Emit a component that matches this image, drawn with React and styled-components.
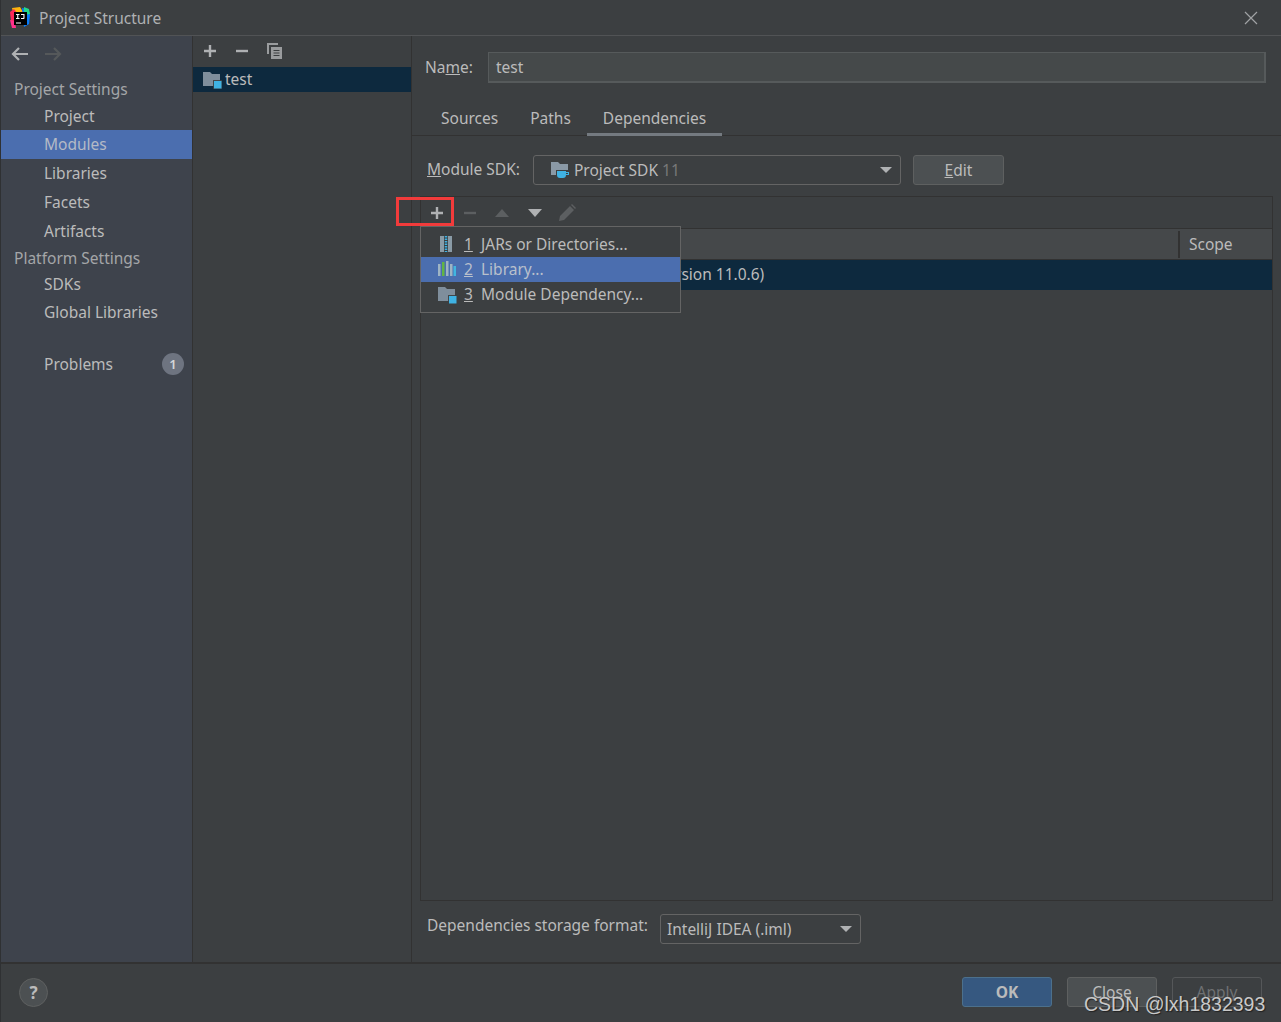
import styled, { createGlobalStyle } from 'styled-components';

const GlobalStyle = createGlobalStyle`
  html, body {
    margin: 0;
    padding: 0;
    background: #3c3f41;
  }
  * {
    box-sizing: border-box;
  }
`;

const Window = styled.div`
  position: relative;
  width: 1281px;
  height: 1022px;
  display: flex;
  flex-direction: column;
  overflow: hidden;
  background: #3c3f41;
  border-left: 1px solid #2f3133;
  color: #bbbbbb;
  font-family: 'Noto Sans', 'Open Sans', sans-serif;
  font-size: 15.5px;
  line-height: 20px;
`;

const TitleBar = styled.div`
  height: 36px;
  flex: none;
  display: flex;
  align-items: center;
  padding: 0 22px 0 8px;
  border-bottom: 1px solid #515355;
  color: #afb1b3;
`;

const TitleText = styled.span`
  margin-left: 8px;
  flex: 1;
`;

const Body = styled.div`
  flex: 1;
  min-height: 0;
  display: flex;
`;

const Sidebar = styled.aside`
  width: 192px;
  flex: none;
  background: #3e434c;
  border-right: 1px solid #323232;
`;

const NavArrows = styled.div`
  height: 40px;
  display: flex;
  align-items: center;
  gap: 13px;
  padding: 0 0 5px 9px;
`;

const SideHeading = styled.div`
  height: ${(p) => p.$h}px;
  display: flex;
  align-items: center;
  padding: 0 0 0 13px;
  color: #a4a6a8;
`;

const SideItem = styled.div`
  height: ${(p) => p.$h || 29}px;
  margin-top: ${(p) => p.$mt || 0}px;
  display: flex;
  align-items: center;
  justify-content: space-between;
  padding: 0 8px 1px 43px;
  background: ${(p) => (p.$active ? '#4b6eaf' : 'transparent')};
  color: ${(p) => (p.$active ? '#b4bac6' : '#bbbbbb')};
`;

const CountBadge = styled.span`
  width: 22px;
  height: 22px;
  border-radius: 50%;
  background: #6e7480;
  color: #d5d7da;
  font-size: 13px;
  font-weight: 600;
  display: flex;
  align-items: center;
  justify-content: center;
`;

const ModulePane = styled.section`
  width: 219px;
  flex: none;
  border-right: 1px solid #323232;
`;

const ModuleTools = styled.div`
  height: 31px;
  display: flex;
  align-items: center;
  gap: 16px;
  padding: 0 0 2px 9px;
`;

const ModuleRow = styled.div`
  height: 25px;
  display: flex;
  align-items: center;
  gap: 3px;
  padding: 0 0 2px 9px;
  background: #0d293e;
`;

const Detail = styled.section`
  flex: 1;
  min-width: 0;
  display: flex;
  flex-direction: column;
`;

const NameRow = styled.div`
  display: flex;
  align-items: center;
  margin-top: 16px;
  padding: 0 15px 0 13px;
  gap: 15px;
`;

const NameLabel = styled.span`
  margin-bottom: 1px;
`;

const NameInput = styled.div`
  flex: 1;
  height: 31px;
  padding: 0 0 1px 7px;
  display: flex;
  align-items: center;
  background: #45494a;
  border: 2px solid #565a5b;
  border-width: 1px 2px 2px 1px;
  color: #bbbbbb;
`;

const Tabs = styled.div`
  height: 52px;
  margin-top: 1px;
  display: flex;
  align-items: flex-end;
  padding-left: 13px;
  border-bottom: 1px solid #323232;
`;

const Tab = styled.div`
  height: 36px;
  padding: 2px 16px 0;
  display: flex;
  align-items: center;
  border-bottom: 3px solid ${(p) => (p.$active ? '#747a80' : 'transparent')};
  margin-bottom: -1px;
`;

const SdkRow = styled.div`
  display: flex;
  align-items: center;
  margin-top: 19px;
  padding-left: 15px;
`;

const FieldLabel = styled.span`
  margin-bottom: ${(p) => p.$lift}px;
`;

const Combo = styled.div`
  width: ${(p) => p.$w}px;
  height: 30px;
  display: flex;
  align-items: center;
  justify-content: space-between;
  padding: 0 8px 1px ${(p) => p.$pl}px;
  background: #3c3f41;
  border: 1px solid #646464;
  border-radius: 3px;
  margin-left: ${(p) => p.$ml}px;
`;

const ComboLabel = styled.span`
  display: flex;
  align-items: center;
  gap: 4px;
`;

const Dim = styled.span`
  color: #787878;
`;

const Caret = styled.span`
  width: 0;
  height: 0;
  border-left: 6px solid transparent;
  border-right: 6px solid transparent;
  border-top: 6px solid #afb1b3;
`;

const Button = styled.div`
  width: ${(p) => p.$w || 90}px;
  height: 30px;
  margin-left: ${(p) => p.$ml || 0}px;
  padding-bottom: 1px;
  display: flex;
  align-items: center;
  justify-content: center;
  border-radius: 3px;
  border: 1px solid ${(p) => (p.$primary ? '#4c708c' : p.$disabled ? '#555759' : '#5e6060')};
  background: ${(p) => (p.$primary ? '#365880' : p.$disabled ? 'transparent' : '#4c5052')};
  color: ${(p) => (p.$disabled ? '#6f7173' : '#bbbbbb')};
  font-weight: ${(p) => (p.$primary ? 700 : 400)};
`;

const DepPanel = styled.div`
  flex: 1;
  min-height: 0;
  margin: 11px 8px 0 8px;
  border: 1px solid #323232;
  display: flex;
  flex-direction: column;
`;

const DepTools = styled.div`
  height: 32px;
  flex: none;
  display: flex;
  align-items: center;
  border-bottom: 1px solid #323232;
`;

const DepTool = styled.span`
  width: 32.5px;
  display: flex;
  justify-content: center;
`;

const TableHead = styled.div`
  height: 31px;
  flex: none;
  display: flex;
  justify-content: flex-end;
  align-items: center;
  background: #45484a;
  border-bottom: 1px solid #323232;
`;

const ScopeCell = styled.div`
  width: 94px;
  height: 27px;
  display: flex;
  align-items: center;
  padding-left: 9px;
  border-left: 2px solid #323232;
`;

const SelectedRow = styled.div`
  height: 30px;
  flex: none;
  display: flex;
  align-items: center;
  padding: 0 0 2px 211px;
  background: #0d293e;
`;

const StorageRow = styled.div`
  display: flex;
  align-items: center;
  height: 30px;
  margin: 13px 0 18px;
  padding-left: 15px;
`;

const Footer = styled.footer`
  height: 60px;
  flex: none;
  display: flex;
  align-items: flex-start;
  padding: 13px 19px 0 18px;
  border-top: 2px solid #323232;
`;

const HelpButton = styled.div`
  width: 29px;
  height: 29px;
  margin-top: 1px;
  border-radius: 50%;
  background: #4c5052;
  border: 1px solid #5e6060;
  color: #bbbbbb;
  font-size: 17px;
  font-weight: 700;
  display: flex;
  align-items: center;
  justify-content: center;
  margin-right: auto;
`;

const Popup = styled.div`
  position: absolute;
  left: 419px;
  top: 226px;
  width: 261px;
  height: 87px;
  padding-top: 5px;
  background: #3c3f41;
  border: 1px solid #646464;
`;

const PopupRow = styled.div`
  height: 25px;
  display: flex;
  align-items: center;
  padding: 0 0 2px 16px;
  background: ${(p) => (p.$active ? '#4b6eaf' : 'transparent')};
  color: ${(p) => (p.$active ? '#b9c0cc' : '#bbbbbb')};
`;

const PopupIcon = styled.span`
  width: 27px;
  flex: none;
  display: flex;
`;

const PopupNumber = styled.u`
  width: 17px;
  flex: none;
`;

const RedMark = styled.div`
  position: absolute;
  left: 395px;
  top: 197px;
  width: 58px;
  height: 29px;
  border: 3px solid #f23b3b;
`;

const Watermark = styled.div`
  position: absolute;
  left: 1083px;
  top: 992px;
  font-family: 'Liberation Sans', Arial, sans-serif;
  font-size: 19.5px;
  line-height: 24px;
  white-space: nowrap;
  color: #c9c9c9;
  text-shadow: 1px 1px 1px #222;
`;

const ToolIcon = ({ children, size = 18, view = '0 0 18 18' }) => (
  <svg width={size} height={size} viewBox={view} fill="none">
    {children}
  </svg>
);

const Plus = ({ c = '#afb1b3' }) => (
  <ToolIcon size={16} view="0 0 16 16">
    <path d="M8 2v12M2 8h12" stroke={c} strokeWidth="2.4" />
  </ToolIcon>
);

const Minus = ({ c = '#afb1b3' }) => (
  <ToolIcon size={16} view="0 0 16 16">
    <path d="M2 8h12" stroke={c} strokeWidth="2.4" />
  </ToolIcon>
);

const Arrow = ({ flip, c }) => (
  <ToolIcon size={20} view="0 0 20 20">
    <path
      d={flip ? 'M2 10h15M11 4l6 6-6 6' : 'M18 10H3M9 4l-6 6 6 6'}
      stroke={c}
      strokeWidth="2.2"
    />
  </ToolIcon>
);

const CopyIcon = () => (
  <ToolIcon size={18} view="0 0 18 18">
    <path d="M2 12V2h10" stroke="#9a9c9e" strokeWidth="2" />
    <path fill="#9a9c9e" d="M5 5h11v12H5z" />
    <path d="M7.5 8.5h6M7.5 11h6M7.5 13.5h6" stroke="#3c3f41" strokeWidth="1.2" />
  </ToolIcon>
);

const FolderBadge = () => (
  <ToolIcon size={20} view="0 0 20 20">
    <path fill="#7f8e9c" d="M1 3h7l2 2h8v12H1z" />
    <path fill="#3c3f41" d="M11 11h9v9h-9z" opacity="0.9" />
    <path fill="#3fb2e3" d="M12 12h7.500v7.500H12z" />
  </ToolIcon>
);

const SdkFolder = () => (
  <ToolIcon size={20} view="0 0 20 20">
    <path fill="#8a99a6" d="M1 2h7l2 2h8v11H1z" />
    <path fill="#3c3f41" d="M6 10h13v9H6z" />
    <path fill="#3fb2e3" d="M7 11h9v4a3 3 0 0 1-3 3h-3a3 3 0 0 1-3-3zM16 12h3v3h-3v-1h2v-1h-2z" />
  </ToolIcon>
);

const JarIcon = () => (
  <ToolIcon size={18} view="0 0 18 18">
    <path fill="#8a9ba6" d="M3 1h12v16H3z" />
    <path fill="#3c3f41" d="M7 1h4v16H7z" />
    <path d="M9 1v16" stroke="#3fb2e3" strokeWidth="2.500" strokeDasharray="1.500 1" />
  </ToolIcon>
);

const LibraryIcon = () => (
  <ToolIcon size={20} view="0 0 20 20">
    <path fill="#9fb4c4" d="M1 5h2.500v12H1zM13 5h2.500v12H13z" />
    <path fill="#62b543" d="M5 3h2.500v14H5z" />
    <path fill="#9fb4c4" d="M9 2h2.500v15H9z" />
    <path fill="#40b6e0" d="M16.500 7H19v10h-2.500z" />
  </ToolIcon>
);

const IdeaLogo = () => (
  <ToolIcon size={22} view="0 0 22 22">
    <path fill="#fdb60d" d="M3 1l8-1 3 5H4z" />
    <path fill="#fe2857" d="M1 5l4-3 3 4-3 10-3-2z" />
    <path fill="#ff318c" d="M1 13l5 1 1 7H3z" />
    <path fill="#087cfa" d="M13 1l6 1 2 6-1 9-5 3z" />
    <path fill="#21d789" d="M15 0l5 2 1 5-6 1z" />
    <path fill="#000" d="M5 5h13v13H5z" />
    <path fill="#fff" d="M7 7h3.500v1H9.300v3h1.200v1H7v-1h1.200V8H7zM12 7h3.500v4.300c0 .5-.5.7-1 .7H12v-1h2.400V8H12zM7 15.500h5v1H7z" />
  </ToolIcon>
);

const CloseIcon = () => (
  <ToolIcon size={16} view="0 0 16 16">
    <path d="M2 2l12 12M14 2L2 14" stroke="#a0a2a4" strokeWidth="1.200" />
  </ToolIcon>
);

const Triangle = ({ down, c }) => (
  <ToolIcon size={16} view="0 0 16 16">
    <path fill={c} d={down ? 'M1 4h14L8 12z' : 'M1 12h14L8 4z'} />
  </ToolIcon>
);

const Pencil = () => (
  <ToolIcon size={20} view="0 0 20 20">
    <path fill="#5c5f61" d="M2 18l1-5L13 3l4 4L7 17zM14 2l1-1 4 4-1 1z" />
  </ToolIcon>
);

const App = () => (
  <>
    <GlobalStyle />
    <Window>
      <TitleBar>
        <IdeaLogo />
        <TitleText>Project Structure</TitleText>
        <CloseIcon />
      </TitleBar>
      <Body>
        <Sidebar>
          <NavArrows>
            <Arrow c="#afb1b3" />
            <Arrow flip c="#55585a" />
          </NavArrows>
          <SideHeading $h={26}>Project Settings</SideHeading>
          <SideItem $h={28}>Project</SideItem>
          <SideItem $active>Modules</SideItem>
          <SideItem>Libraries</SideItem>
          <SideItem>Facets</SideItem>
          <SideItem $h={28}>Artifacts</SideItem>
          <SideHeading $h={25}>Platform Settings</SideHeading>
          <SideItem $h={28}>SDKs</SideItem>
          <SideItem>Global Libraries</SideItem>
          <SideItem $mt={23}>
            Problems
            <CountBadge>1</CountBadge>
          </SideItem>
        </Sidebar>
        <ModulePane>
          <ModuleTools>
            <Plus />
            <Minus />
            <CopyIcon />
          </ModuleTools>
          <ModuleRow>
            <FolderBadge />
            test
          </ModuleRow>
        </ModulePane>
        <Detail>
          <NameRow>
            <NameLabel>
              Na<u>m</u>e:
            </NameLabel>
            <NameInput>test</NameInput>
          </NameRow>
          <Tabs>
            <Tab>Sources</Tab>
            <Tab>Paths</Tab>
            <Tab $active>Dependencies</Tab>
          </Tabs>
          <SdkRow>
            <FieldLabel $lift={3}>
              <u>M</u>odule SDK:
            </FieldLabel>
            <Combo $w={368} $ml={13} $pl={16}>
              <ComboLabel>
                <SdkFolder />
                <span>
                  Project SDK <Dim>11</Dim>
                </span>
              </ComboLabel>
              <Caret />
            </Combo>
            <Button $w={91} $ml={12}>
              <span>
                <u>E</u>dit
              </span>
            </Button>
          </SdkRow>
          <DepPanel>
            <DepTools>
              <DepTool>
                <Plus />
              </DepTool>
              <DepTool>
                <Minus c="#5c5f61" />
              </DepTool>
              <DepTool>
                <Triangle c="#5c5f61" />
              </DepTool>
              <DepTool>
                <Triangle down c="#afb1b3" />
              </DepTool>
              <DepTool>
                <Pencil />
              </DepTool>
            </DepTools>
            <TableHead>
              <ScopeCell>Scope</ScopeCell>
            </TableHead>
            <SelectedRow>11 (version 11.0.6)</SelectedRow>
          </DepPanel>
          <StorageRow>
            <FieldLabel $lift={9}>Dependencies storage format:</FieldLabel>
            <Combo $w={201} $ml={12} $pl={6}>
              <span>IntelliJ IDEA (.iml)</span>
              <Caret />
            </Combo>
          </StorageRow>
        </Detail>
      </Body>
      <Footer>
        <HelpButton>?</HelpButton>
        <Button $primary>OK</Button>
        <Button $ml={15}>Close</Button>
        <Button $ml={15} $disabled>
          Apply
        </Button>
      </Footer>
      <RedMark />
      <Popup>
        <PopupRow>
          <PopupIcon>
            <JarIcon />
          </PopupIcon>
          <PopupNumber>1</PopupNumber>
          JARs or Directories...
        </PopupRow>
        <PopupRow $active>
          <PopupIcon>
            <LibraryIcon />
          </PopupIcon>
          <PopupNumber>2</PopupNumber>
          Library...
        </PopupRow>
        <PopupRow>
          <PopupIcon>
            <FolderBadge />
          </PopupIcon>
          <PopupNumber>3</PopupNumber>
          Module Dependency...
        </PopupRow>
      </Popup>
      <Watermark>CSDN @lxh1832393</Watermark>
    </Window>
  </>
);

export default App;
